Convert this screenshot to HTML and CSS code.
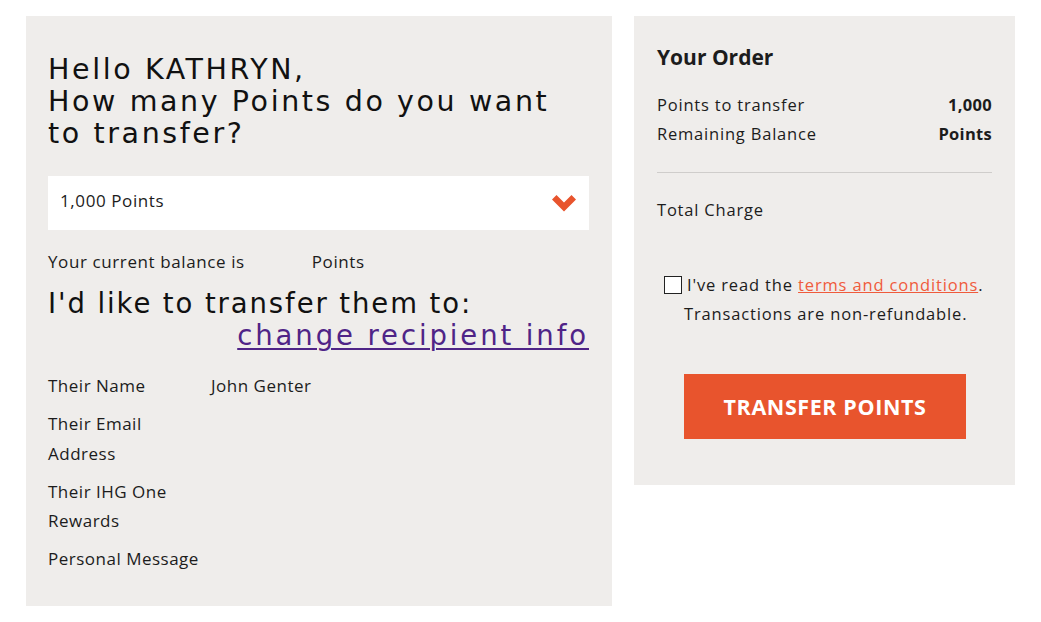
FILE: index.html
```html
<!DOCTYPE html>
<html lang="en">
<head>
<meta charset="utf-8">
<title>Transfer Points</title>
<link rel="stylesheet" href="styles.css">
</head>
<body>
<main class="page">
  <section class="panel transfer">
    <h1 class="headline">Hello KATHRYN,<br>How many Points do you want to transfer?</h1>
    <div class="select">
      <span class="select-value">1,000 Points</span>
      <svg class="chevron" width="24" height="17" viewBox="0 0 24 17" aria-hidden="true">
        <path d="M0 4.5 L4.5 0 L12 7.5 L19.5 0 L24 4.5 L12 16.5 Z" fill="#e8542d"/>
      </svg>
    </div>
    <p class="balance">Your current balance is <span class="balance-num"></span>Points</p>
    <h2 class="subhead">I'd like to transfer them to:</h2>
    <div class="link-row"><a class="recipient-link" href="#">change recipient info</a></div>
    <dl class="details">
      <dt>Their Name</dt><dd>John Genter</dd>
      <dt>Their Email Address</dt><dd></dd>
      <dt>Their IHG One Rewards</dt><dd></dd>
      <dt>Personal Message</dt><dd></dd>
    </dl>
  </section>
  <aside class="panel order">
    <h3 class="order-title">Your Order</h3>
    <div class="order-row"><span>Points to transfer</span><strong>1,000</strong></div>
    <div class="order-row"><span>Remaining Balance</span><strong>Points</strong></div>
    <hr class="divider">
    <div class="order-row"><span>Total Charge</span><strong></strong></div>
    <p class="terms"><span class="box"></span>I've read the <a class="terms-link" href="#">terms and conditions</a>. Transactions are non-refundable.</p>
    <button class="cta" type="button">TRANSFER POINTS</button>
  </aside>
</main>
</body>
</html>
```
FILE: styles.css
```css
html, body {
  margin: 0;
  padding: 0;
  background: #ffffff;
}
body {
  font-family: "Open Sans", "Liberation Sans", sans-serif;
  color: #1c1c1c;
}
.page {
  display: flex;
  align-items: flex-start;
  gap: 22px;
  padding: 16px 26px;
}
.panel {
  background: #efedeb;
  box-sizing: border-box;
}
.transfer {
  width: 586px;
  height: 590px;
  padding: 38px 23px 0 22px;
}
.headline,
.subhead,
.recipient-link {
  font-family: "DejaVu Sans", sans-serif;
  font-weight: 400;
  font-size: 27.5px;
  line-height: 32px;
}
.headline {
  margin: 0;
  max-width: 520px;
  font-size: 28.5px;
  letter-spacing: 2.6px;
  color: #111;
}
.select {
  margin-top: 26px;
  height: 54px;
  background: #fff;
  display: flex;
  align-items: center;
  justify-content: space-between;
  padding: 0 13px 0 12px;
}
.select-value {
  font-size: 17px;
  letter-spacing: 0.6px;
  line-height: 24px;
  margin-top: -4px;
}
.chevron {
  display: block;
}
.balance {
  margin: 20px 0 0;
  font-size: 17px;
  line-height: 24px;
  letter-spacing: 0.6px;
}
.balance-num {
  display: inline-block;
  width: 62px;
}
.subhead {
  margin: 13px 0 0;
  letter-spacing: 1.9px;
  color: #111;
}
.link-row {
  text-align: right;
  line-height: 32px;
}
.recipient-link {
  letter-spacing: 2.9px;
  color: #4f2487;
  text-decoration: underline;
  text-decoration-thickness: 2px;
  text-underline-offset: 3px;
}
.details {
  margin: 16px 0 0;
  display: grid;
  grid-template-columns: 158px 1fr;
  column-gap: 5px;
  row-gap: 8.5px;
  font-size: 17px;
  line-height: 29.5px;
  letter-spacing: 0.5px;
}
.details dt, .details dd {
  margin: 0;
}
.order {
  width: 381px;
  height: 469px;
  padding: 27px 23px 0 23px;
}
.order-title {
  margin: 0 0 19px;
  font-size: 21px;
  line-height: 28px;
  font-weight: 700;
}
.order-row {
  display: flex;
  justify-content: space-between;
  font-size: 16.5px;
  line-height: 29px;
  letter-spacing: 0.8px;
}
.order-row strong {
  font-weight: 700;
  letter-spacing: 0.3px;
}
.divider {
  border: 0;
  border-top: 1px solid #cfcdcb;
  margin: 24px 0 22px;
}
.terms {
  margin: 46px 0 0;
  padding-left: 27px;
  font-size: 16.5px;
  line-height: 29px;
  letter-spacing: 0.85px;
}
.box {
  display: inline-block;
  width: 16px;
  height: 16px;
  border: 1px solid #222;
  background: #fff;
  margin: 0 5px 0 -20px;
  vertical-align: -3px;
}
.terms-link {
  color: #ef5b3c;
  text-decoration: underline;
}
.cta {
  display: block;
  margin: 46px 0 0 27px;
  width: 282px;
  height: 65px;
  border: 0;
  background: #e8542d;
  color: #fff;
  font-family: "Open Sans", sans-serif;
  font-weight: 700;
  font-size: 21.5px;
  letter-spacing: 0.6px;
}
```
